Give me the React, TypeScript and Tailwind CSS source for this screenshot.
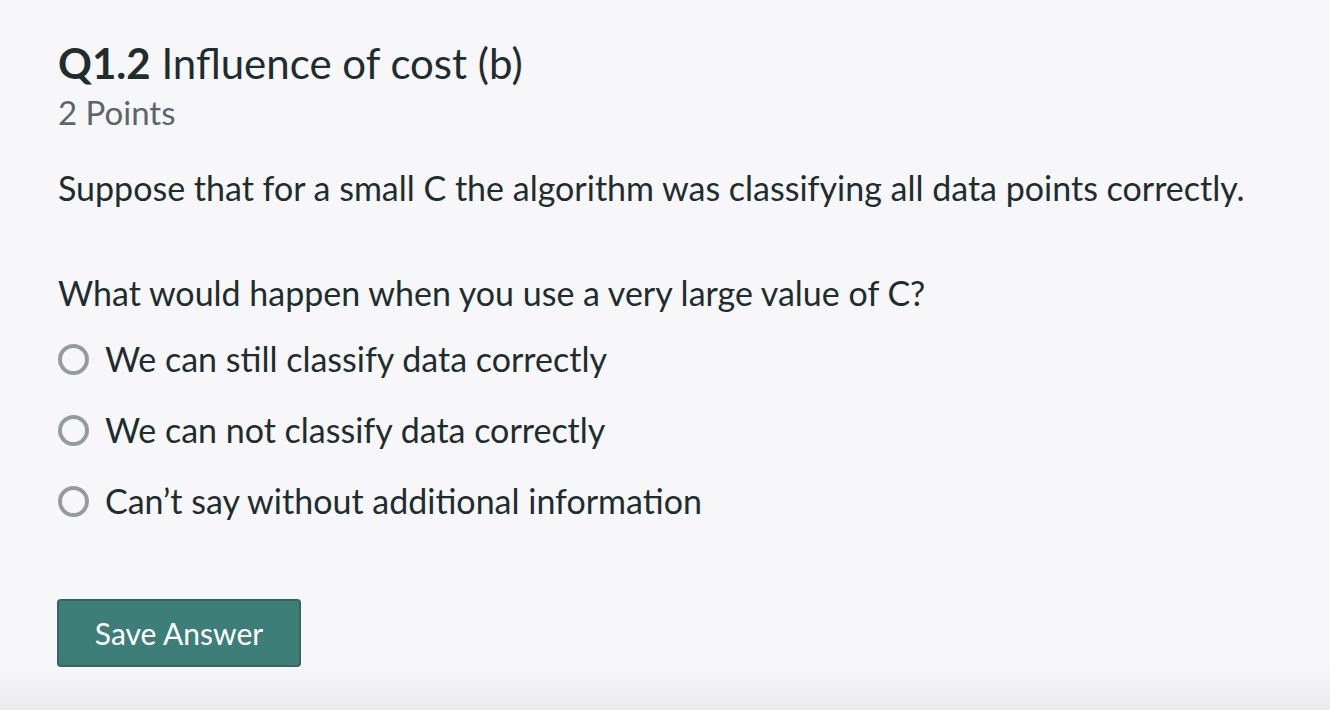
const options = [
  "We can still classify data correctly",
  "We can not classify data correctly",
  "Can\u2019t say without additional information",
];

export default function App() {
  return (
    <div className="h-[710px] flex flex-col bg-[#f7f7f9] text-[#1f2d2f] font-['Lato',sans-serif]">
      <div className="flex-1 pl-[58px] pt-[37px]">
        {/* Question header */}
        <h1 className="text-[42px] leading-[52px]">
          <span className="font-bold">Q1.2</span> Influence of cost (b)
        </h1>
        <p className="mt-[5px] text-[33px] leading-[36px] text-[#5b6668]">2 Points</p>

        <p className="mt-[37px] text-[34px] leading-[42px]">
          Suppose that for a small C the algorithm was classifying all data points correctly.
        </p>
        <p className="mt-[63px] text-[34px] leading-[42px]">
          What would happen when you use a very large value of C?
        </p>

        {/* Options */}
        <div className="mt-[24px] flex flex-col gap-[29px]">
          {options.map((opt) => (
            <label key={opt} className="flex items-center gap-[16px] text-[34px] leading-[42px]">
              <span className="w-[31px] h-[31px] rounded-full border-[4px] border-[#959c9b] shrink-0" />
              <span>{opt}</span>
            </label>
          ))}
        </div>

        <button className="mt-[77px] -ml-px w-[244px] h-[68px] rounded-[4px] border-2 border-[#30675f] bg-[#3d7e79] text-white text-[30px]">
          Save Answer
        </button>
      </div>
      <div className="h-[50px] bg-gradient-to-b from-[#f7f7f9] to-[#eaeaec]" />
    </div>
  );
}
